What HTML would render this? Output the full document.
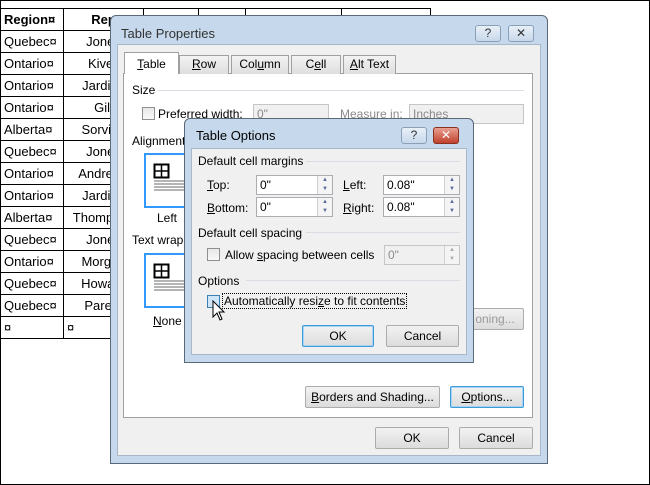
<!DOCTYPE html><html><head><style>
*{box-sizing:border-box}
body{margin:0;width:650px;height:485px;position:relative;overflow:hidden;background:#fff;font-family:"Liberation Sans",sans-serif;font-size:12px;color:#000}
.frame{position:absolute;left:0;top:0;width:650px;height:485px;border:1px solid #000;pointer-events:none}
.a{position:absolute}
table{position:absolute;left:0;top:8px;border-collapse:collapse;font-size:13px;table-layout:fixed}
td{border:1px solid #000;height:22px;padding:0 3px;white-space:nowrap;overflow:hidden;line-height:20px}
td:nth-child(2){text-align:center;overflow:visible}
.dlg{background:#c5d8ec;border:1px solid #5a6878;border-radius:6px 6px 0 0}
.cl{background:#f0f0f0;border:1px solid #a9b8c8}
.btn{position:absolute;border:1px solid #acacac;border-radius:2px;background:linear-gradient(#f2f2f2,#dcdcdc);text-align:center;line-height:20px;font-size:12px}
.btn.d{border-color:#3c9bd9;box-shadow:inset 0 0 0 1px #a8d4f3}
.line{position:absolute;height:1px;background:#d8dde3}
.inp{position:absolute;background:#fff;border:1px solid #abadb3;height:20px;line-height:18px;padding-left:3px;font-size:12px}
.inp.dis{background:#f0f0f0;border-color:#c6c6c6;color:#8a8a8a}
.spin{position:absolute;right:0;top:0;width:15px;height:18px;border-left:1px solid #d0d0d0;background:#f4f4f4;font-size:6px;line-height:9px;text-align:center;color:#5a6a9a}
.cb{position:absolute;width:13px;height:13px;border:1px solid #8f8f8f;background:linear-gradient(#e8e8e8,#f8f8f8)}
.tb{position:absolute;width:26px;height:17px;border:1px solid #8aa0b8;border-radius:3px;background:linear-gradient(#e8f0f8,#c8d8ea);text-align:center;font-size:12px;line-height:15px;color:#333}
.tab{position:absolute;top:55px;height:19px;border:1px solid #a0a0a0;border-bottom:none;background:linear-gradient(#f3f3f3,#dedede);text-align:center;line-height:17px;font-size:12px}
.ico{position:absolute;width:45px;height:55px;border:2px solid #3399ff;background:#fff}
</style></head><body>
<table>
<tr style="font-weight:bold"><td style="width:63px">Region¤</td><td style="width:80px">Rep</td><td style="width:55px"></td><td style="width:47px"></td><td style="width:96px"></td><td style="width:89px"></td></tr>
<tr><td>Quebec¤</td><td>Jones</td><td></td><td></td><td></td><td></td></tr>
<tr><td>Ontario¤</td><td>Kivell</td><td></td><td></td><td></td><td></td></tr>
<tr><td>Ontario¤</td><td>Jardine</td><td></td><td></td><td></td><td></td></tr>
<tr><td>Ontario¤</td><td>Gill</td><td></td><td></td><td></td><td></td></tr>
<tr><td>Alberta¤</td><td>Sorvino</td><td></td><td></td><td></td><td></td></tr>
<tr><td>Quebec¤</td><td>Jones</td><td></td><td></td><td></td><td></td></tr>
<tr><td>Ontario¤</td><td>Andrews</td><td></td><td></td><td></td><td></td></tr>
<tr><td>Ontario¤</td><td>Jardine</td><td></td><td></td><td></td><td></td></tr>
<tr><td>Alberta¤</td><td>Thompson</td><td></td><td></td><td></td><td></td></tr>
<tr><td>Quebec¤</td><td>Jones</td><td></td><td></td><td></td><td></td></tr>
<tr><td>Ontario¤</td><td>Morgan</td><td></td><td></td><td></td><td></td></tr>
<tr><td>Quebec¤</td><td>Howard</td><td></td><td></td><td></td><td></td></tr>
<tr><td>Quebec¤</td><td>Parent</td><td></td><td></td><td></td><td></td></tr>
<tr><td>¤</td><td style="text-align:left">¤</td><td></td><td></td><td></td><td></td></tr>
</table>

<!-- Table Properties -->
<div class="a dlg" style="left:110px;top:15px;width:438px;height:449px"></div>
<div class="a" style="left:121px;top:26px;font-size:13px;color:#333">Table Properties</div>
<div class="tb" style="left:475px;top:25px">?</div>
<div class="tb" style="left:508px;top:25px">✕</div>
<div class="a cl" style="left:117px;top:44px;width:424px;height:412px"></div>
<div class="a" style="left:123px;top:73px;width:410px;height:345px;background:#fff;border:1px solid #a0a0a0"></div>
<div class="tab" style="left:124px;top:52px;width:55px;height:22px;background:#fff;line-height:22px"><u>T</u>able</div>
<div class="tab" style="left:179px;width:50px"><u>R</u>ow</div>
<div class="tab" style="left:231px;width:58px">Col<u>u</u>mn</div>
<div class="tab" style="left:291px;width:50px">C<u>e</u>ll</div>
<div class="tab" style="left:343px;width:53px"><u>A</u>lt Text</div>
<div class="a" style="left:132px;top:83px">Size</div><div class="line" style="left:158px;top:90px;width:366px"></div>
<div class="cb" style="left:142px;top:107px"></div>
<div class="a" style="left:158px;top:107px">Preferred width:</div>
<div class="inp dis" style="left:253px;top:104px;width:76px">0"</div>
<div class="a" style="left:340px;top:107px;color:#8a8a8a">Measure in:</div>
<div class="inp dis" style="left:409px;top:104px;width:115px">Inches</div>
<div class="a" style="left:132px;top:134px">Alignment</div>
<div class="ico" style="left:144px;top:153px"><svg width="41" height="51"><rect x="8.5" y="9.5" width="14" height="13" fill="none" stroke="#000" stroke-width="2"/><path d="M15.5 9v14M8 16h15" stroke="#000" stroke-width="1.5"/><path d="M8 26h30M8 29h30M8 32h30M8 35h30" stroke="#888" stroke-width="1.3"/></svg></div>
<div class="a" style="left:157px;top:211px">Left</div>
<div class="a" style="left:132px;top:233px">Text wrapping</div>
<div class="ico" style="left:144px;top:253px"><svg width="41" height="51"><rect x="8.5" y="9.5" width="14" height="13" fill="none" stroke="#000" stroke-width="2"/><path d="M15.5 9v14M8 16h15" stroke="#000" stroke-width="1.5"/><path d="M8 26h30M8 29h30M8 32h30M8 35h30" stroke="#888" stroke-width="1.3"/></svg></div>
<div class="a" style="left:153px;top:314px"><u>N</u>one</div>
<div class="btn" style="left:466px;top:308px;width:58px;height:22px;color:#999">oning...</div>
<div class="btn" style="left:305px;top:386px;width:135px;height:22px"><u>B</u>orders and Shading...</div>
<div class="btn d" style="left:450px;top:386px;width:74px;height:22px"><u>O</u>ptions...</div>
<div class="btn" style="left:375px;top:427px;width:74px;height:22px">OK</div>
<div class="btn" style="left:459px;top:427px;width:74px;height:22px">Cancel</div>

<!-- Table Options -->
<div class="a dlg" style="left:184px;top:118px;width:290px;height:245px"></div>
<div class="a" style="left:196px;top:128px;font-size:13px">Table Options</div>
<div class="tb" style="left:401px;top:127px">?</div>
<div class="tb" style="left:433px;top:127px;background:linear-gradient(#e8a090,#c0402c);border-color:#8a3020;color:#fff">✕</div>
<div class="a cl" style="left:191px;top:148px;width:276px;height:207px"></div>
<div class="a" style="left:198px;top:154px">Default cell margins</div><div class="line" style="left:306px;top:161px;width:154px"></div>
<div class="a" style="left:207px;top:178px"><u>T</u>op:</div>
<div class="inp" style="left:256px;top:175px;width:77px">0"<div class="spin">▲<br>▼</div></div>
<div class="a" style="left:343px;top:178px"><u>L</u>eft:</div>
<div class="inp" style="left:383px;top:175px;width:77px">0.08"<div class="spin">▲<br>▼</div></div>
<div class="a" style="left:207px;top:201px"><u>B</u>ottom:</div>
<div class="inp" style="left:256px;top:197px;width:77px">0"<div class="spin">▲<br>▼</div></div>
<div class="a" style="left:343px;top:201px"><u>R</u>ight:</div>
<div class="inp" style="left:383px;top:197px;width:77px">0.08"<div class="spin">▲<br>▼</div></div>
<div class="a" style="left:198px;top:226px">Default cell spacing</div><div class="line" style="left:306px;top:232px;width:154px"></div>
<div class="cb" style="left:207px;top:248px"></div>
<div class="a" style="left:225px;top:248px">Allow <u>s</u>pacing between cells</div>
<div class="inp dis" style="left:384px;top:245px;width:76px">0"<div class="spin" style="color:#aaa">▲<br>▼</div></div>
<div class="a" style="left:198px;top:274px">Options</div><div class="line" style="left:246px;top:280px;width:214px"></div>
<div class="cb" style="left:207px;top:295px;border-color:#3c7fb1;background:#cfe6f8"></div>
<div class="a" style="left:222px;top:293px;border:1px dotted #000;padding:0 1px;line-height:14px">Automatically resi<u>z</u>e to fit contents</div>
<svg class="a" style="left:212px;top:300px" width="14" height="22" viewBox="0 0 14 22"><path d="M1 1V17L5 13L8 20L10 19L7 12H12Z" fill="#fff" stroke="#000"/></svg>
<div class="btn d" style="left:302px;top:325px;width:72px;height:22px">OK</div>
<div class="btn" style="left:386px;top:325px;width:73px;height:22px">Cancel</div>
<div class="frame"></div>
</body></html>
